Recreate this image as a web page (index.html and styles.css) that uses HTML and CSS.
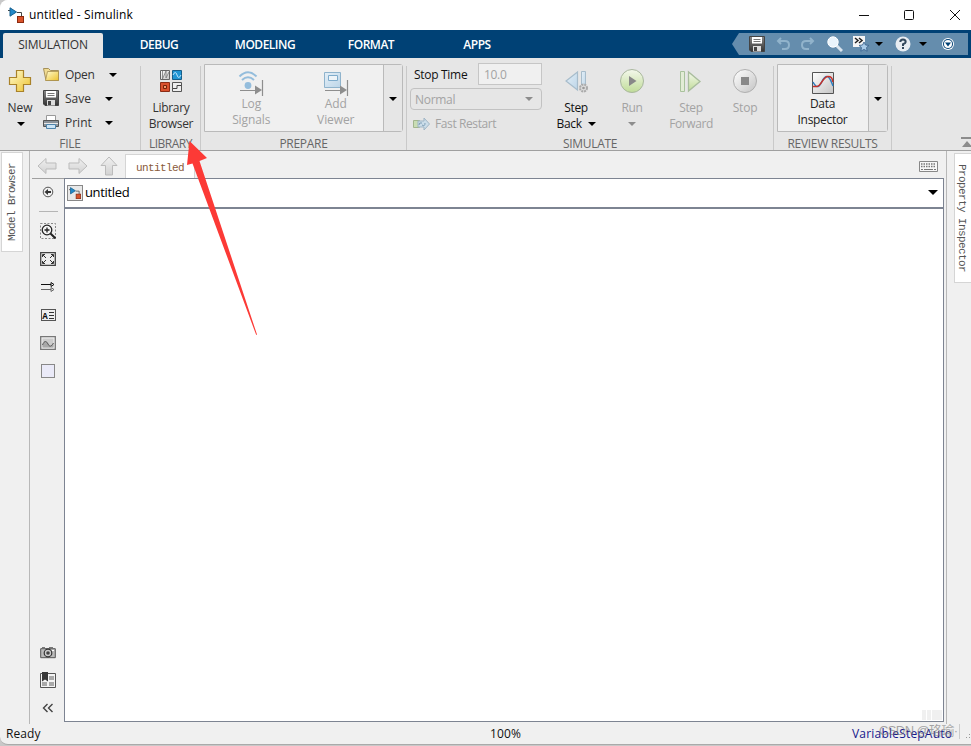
FILE: index.html
```
<!DOCTYPE html>
<html lang="en">
<head>
  <meta charset="UTF-8" />
  <title>untitled - Simulink</title>
  <link rel="stylesheet" href="styles.css">
</head>
<body>
  <svg class="defs" width="0" height="0">
    <defs>
      <linearGradient id="gold" x1="0" y1="0" x2="1" y2="1"><stop offset="0" stop-color="#fffbd0"/><stop offset="1" stop-color="#edc22e"/></linearGradient>
      <linearGradient id="grey" x1="0" y1="0" x2="1" y2="1"><stop offset="0" stop-color="#fff"/><stop offset="1" stop-color="#c4c4c4"/></linearGradient>
      <linearGradient id="nav" x1="0" y1="0" x2="0" y2="1"><stop offset="0" stop-color="#f0f0f0"/><stop offset="1" stop-color="#d2d2d2"/></linearGradient>
      <linearGradient id="dark" x1="0" y1="0" x2="0" y2="1"><stop offset="0" stop-color="#888"/><stop offset="1" stop-color="#333"/></linearGradient>
      <linearGradient id="green" x1="0" y1="0" x2="0" y2="1"><stop offset="0" stop-color="#f4f8ec"/><stop offset="1" stop-color="#c0dc98"/></linearGradient>
      <linearGradient id="blue" x1="0" y1="0" x2="1" y2="1"><stop offset="0" stop-color="#e4eff7"/><stop offset="1" stop-color="#bcd5e8"/></linearGradient>
    </defs>
    <symbol id="model" viewBox="0 0 16 16">
      <path d="M0 3.500h2M9 5.500h4.500V10" fill="none" stroke="#444"/>
      <path d="M2 .8 8.500 5 2 9.200z" fill="#2389c8" stroke="#17608f"/>
      <rect x="9.500" y="9.500" width="6" height="6" fill="#d9532a" stroke="#8c2a10"/>
    </symbol>
    <symbol id="floppy" viewBox="0 0 16 16">
      <path d="M.5.5h15v15H2L.5 14z" fill="url(#dark)" stroke="#444"/>
      <path d="M3 1h10v6.500H3z" fill="#fff"/><path d="M4.500 3.500h7M4.500 5.500h7" stroke="#777"/>
      <path d="M4 10h8v5.500H4z" fill="#ddd"/><path d="M5 11h3v4H5z" fill="#444"/>
    </symbol>
  </svg>

  <div class="window">
    <header class="titlebar">
      <svg class="app-icon" width="16" height="16"><use href="#model"/></svg>
      <span class="title">untitled - Simulink</span>
      <svg class="win-btns" width="101" height="14" fill="none" stroke="#111">
        <path d="M0 7.500h10"/><rect x="45.500" y="2.500" width="9" height="9" rx="1"/><path d="m91 2 10 10M101 2 91 12"/>
      </svg>
    </header>

    <nav class="tabs">
      <div class="tab active"><span>SIMULATION</span></div>
      <div class="tab"><span>DEBUG</span></div>
      <div class="tab"><span>MODELING</span></div>
      <div class="tab"><span>FORMAT</span></div>
      <div class="tab"><span>APPS</span></div>
      <div class="quick">
        <svg width="16" height="16"><use href="#floppy"/></svg>
        <svg class="undo" width="14" height="14" fill="none" stroke="#91b3cb" stroke-width="2"><path d="M5 1 2 4l3 3M2 4h7q4 0 4 4t-4 4H6"/></svg>
        <svg class="redo" width="14" height="14" fill="none" stroke="#91b3cb" stroke-width="2"><path d="m9 1 3 3-3 3M12 4H5Q1 4 1 8t4 4h3"/></svg>
        <svg class="search" width="16" height="16"><path d="m9 9 6 6" stroke="#d9e4ee" stroke-width="3"/><circle cx="6" cy="6" r="5.200" fill="#e9f3fb" stroke="#fff"/></svg>
        <svg class="fav" width="16" height="16"><path d="M0 0h12v11H0z" fill="#f5f5f5"/><path d="m2 2 3 2.500L2 7M6 2l3 2.500L6 7" fill="none" stroke="#222" stroke-width="1.500"/><path d="m11 6 1.500 3 3.500.4-2.500 2.200.7 3.600-3.200-1.800-3.200 1.800.7-3.600L6 9.400 9.500 9z" fill="#a9cbe8" stroke="#3e6791" stroke-width=".9"/></svg>
        <i class="caret"></i>
        <svg class="help" width="16" height="16"><circle cx="8" cy="8" r="7.500" fill="#e8edf2"/><path d="M5.300 6Q5.300 3.500 8 3.500T10.700 6Q10.700 7.200 8 8.300V10M8 11v2" fill="none" stroke="#34495d" stroke-width="2"/></svg>
        <i class="caret"></i>
        <svg class="more" width="12" height="12"><circle cx="6" cy="6" r="6" fill="#fff"/><circle cx="6" cy="6" r="5" fill="#004175"/><circle cx="6" cy="6" r="4" fill="#fff"/><path d="M3 4.500h6L6 8.500z" fill="#004175"/></svg>
      </div>
    </nav>

    <section class="ribbon">
      <div class="group file">
        <div class="content">
          <div class="new-btn">
            <svg width="24" height="24"><path d="M8.500 1.500h7v7h7v7h-7v7h-7v-7h-7v-7h7z" fill="url(#gold)" stroke="#a9822a" stroke-width="1.200"/></svg>
            <span>New</span>
            <i class="caret"></i>
          </div>
          <div class="file-rows">
            <div class="file-row open">
              <svg width="17" height="16"><path d="M.5 2.500h5l2 2h8v10H3z" fill="#f1dc92" stroke="#a5905a"/><path d="M4.500 5.500h11v9H2.500z" fill="url(#gold)" stroke="#a88f4f" stroke-width=".8"/></svg>
              <span>Open</span><i class="caret"></i>
            </div>
            <div class="file-row">
              <svg width="17" height="16"><use href="#floppy" width="16" height="16"/></svg>
              <span>Save</span><i class="caret"></i>
            </div>
            <div class="file-row">
              <svg width="17" height="16"><path d="M3.500 1.500h9v6h-9z" fill="#fff" stroke="#999"/><path d="M.5 6.500h15v6H.5z" fill="#8b939b" stroke="#555"/><path d="M1 9.500h14" stroke="#e8e8e8"/><path d="M3.500 10.500h9v4h-9z" fill="#cde5f6" stroke="#4f85ac"/></svg>
              <span>Print</span><i class="caret"></i>
            </div>
          </div>
        </div>
        <div class="group-name">FILE</div>
      </div>

      <div class="group library">
        <div class="content">
          <div class="big-btn">
            <svg width="24" height="24">
              <path d="M1.500 1.500h9v9h-9z" fill="url(#grey)" stroke="#666"/><path d="M3.500 2v8l3.500-8v7l3-6" fill="none" stroke="#777" stroke-width=".8"/>
              <path d="M13.500 1.500h9v9h-9z" fill="#2296d4" stroke="#175e89"/><path d="M14 6q2.500-5 4 0t4 0" fill="none" stroke="#bfe6ff"/>
              <path d="M1.500 13.500h9v9h-9z" fill="#d9502c" stroke="#8b2c15"/><path d="M4.500 16.500h3v3h-3z" fill="#f39b6c" stroke="#742008"/>
              <path d="M13.500 13.500h9v9h-9z" fill="#eee" stroke="#555"/><path d="M14 19.500h4v-3h4" fill="none" stroke="#444"/>
            </svg>
            <span>Library<br>Browser</span>
          </div>
        </div>
        <div class="group-name">LIBRARY</div>
      </div>

      <div class="group prepare">
        <div class="content">
          <div class="gallery">
            <div class="gallery-items">
              <div class="gallery-item disabled">
                <svg width="26" height="26"><path d="M2 20.500h17M24.500 10v16" fill="none" stroke="#8e8e8e" stroke-width="1.200"/><path d="M17 15.500 24 20l-7 4.500z" fill="#8e8e8e"/><circle cx="10" cy="15.500" r="3.400" fill="#94bddc"/><path d="M4 10q6-5.500 12 0M1.500 6.500q8.500-8.500 17 0" fill="none" stroke="#94bddc" stroke-width="2"/></svg>
                <span>Log<br>Signals</span>
              </div>
              <div class="gallery-item disabled">
                <svg width="26" height="26"><path d="M1.500 2.500h16v15h-16z" fill="url(#blue)" stroke="#8fb3cc"/><path d="M5.500 5.500h9v5h-9z" fill="#eef4f8" stroke="#7faccc"/><path d="M2 20.500h17M24.500 10v16" fill="none" stroke="#8e8e8e" stroke-width="1.200"/><path d="M17 15.500 24 20l-7 4.500z" fill="#8e8e8e"/></svg>
                <span>Add<br>Viewer</span>
              </div>
            </div>
            <div class="gallery-more"><i class="caret"></i></div>
          </div>
        </div>
        <div class="group-name">PREPARE</div>
      </div>

      <div class="group simulate">
        <div class="content">
          <div class="sim-form">
            <div class="stop-time"><label for="stopTime">Stop Time</label><input id="stopTime" type="text" value="10.0" disabled></div>
            <div class="mode"><span>Normal</span><i class="caret"></i></div>
            <div class="restart">
              <svg width="17" height="14"><path d="M.5 3.500h6v7h-6z" fill="#c9ddb4" stroke="#a2b58e"/><path d="M5 4h6V1l5.500 6L11 13v-3H5z" fill="#cbdde9" stroke="#9fb5c5"/><path d="M6 8q0-3 3-2M12 6q0 4-3 2" fill="none" stroke="#7d9db5"/></svg>
              <span>Fast Restart</span>
            </div>
          </div>
          <div class="big-btn step-back">
            <svg width="26" height="26"><path d="M13.500 4v18L2 13z" fill="url(#blue)" stroke="#a7bccb" stroke-width="1.200"/><path d="M17.500 3.500h4v19h-4z" fill="url(#blue)" stroke="#a7bccb"/><circle cx="19.500" cy="20" r="3.500" fill="#ddd" stroke="#aaa" stroke-width="2" stroke-dasharray="2 .8"/><circle cx="19.500" cy="20" r="1.300" fill="#999"/></svg>
            <span>Step<br>Back <i class="caret"></i></span>
          </div>
          <div class="big-btn run disabled">
            <svg width="26" height="26"><circle cx="13" cy="13" r="11.500" fill="url(#green)" stroke="#a9b79e"/><path d="M10 8v10l7.500-5z" fill="#888"/></svg>
            <span>Run</span>
            <i class="caret"></i>
          </div>
          <div class="big-btn forward disabled">
            <svg width="26" height="26"><path d="M2.500 3.500h4v20h-4z" fill="#e2ecd6" stroke="#a9c29d"/><path d="M10.500 4v19l11.500-9.500z" fill="url(#green)" stroke="#a9bd9d" stroke-width="1.300"/></svg>
            <span>Step<br>Forward</span>
          </div>
          <div class="big-btn stop disabled">
            <svg width="26" height="26"><circle cx="13" cy="13" r="11.500" fill="url(#grey)" stroke="#b0b0b0"/><path d="M9 9h8v8H9z" fill="#888"/></svg>
            <span>Stop</span>
          </div>
        </div>
        <div class="group-name">SIMULATE</div>
      </div>

      <div class="group review">
        <div class="content">
          <div class="gallery">
            <div class="gallery-items">
              <div class="gallery-item">
                <svg width="24" height="26"><path d="M1.500 2.500h21v21h-21z" fill="url(#grey)" stroke="#555"/><path d="M2 12c2 4 3 5 5 4.500 4-1 4-10 9-10 3 0 4 5 6 9.500" fill="none" stroke="#2c7dc0" stroke-width="1.500"/><path d="M2 16.500h4c4 0 6-10 11-10 4 0 4 2 5 5.500" fill="none" stroke="#c73028" stroke-width="1.500"/></svg>
                <span>Data<br>Inspector</span>
              </div>
            </div>
            <div class="gallery-more"><i class="caret"></i></div>
          </div>
        </div>
        <div class="group-name">REVIEW RESULTS</div>
      </div>
      <svg class="collapse" width="10" height="11"><path d="M0 0h10v2H0zM1 10l5-6 4 4.500V10z" fill="#8c8c8c"/></svg>
    </section>

    <main class="workspace">
      <aside class="left-rail"><div class="side-tab">Model Browser</div></aside>

      <div class="center">
        <div class="doc-bar">
          <svg width="20" height="18"><path d="M1 9 9 1.500V6h10v6H9v4.500z" fill="url(#nav)" stroke="#bbb"/></svg>
          <svg width="20" height="18"><path d="M19 9l-8-7.500V6H1v6h10v4.500z" fill="url(#nav)" stroke="#bbb"/></svg>
          <svg class="up" width="18" height="20"><path d="M9 1 1 9.500h4.500V19h7V9.500H17z" fill="url(#nav)" stroke="#bbb"/></svg>
          <div class="doc-tab">untitled</div>
          <svg class="keyboard" width="19" height="11"><path d="M.5.5h18v10H.5z" fill="#f7f7f7" stroke="#888"/><path d="M2 3h15M2 5.500h15" stroke="#777" stroke-width="1.500" stroke-dasharray="1.500 1"/><path d="M2 8.500h2M5 8.500h9M15 8.500h2" stroke="#777"/></svg>
        </div>

        <div class="editor">
          <div class="palette">
            <svg class="hide-bar" width="12" height="12"><circle cx="6" cy="6" r="4.800" fill="none" stroke="#555"/><path d="M9 6H5" stroke="#333" stroke-width="2"/><path d="M6 3v6L2.500 6z" fill="#333"/></svg>
            <hr>
            <svg width="16" height="16"><path d="M.5.500h15v15H.5z" fill="none" stroke="#888" stroke-dasharray="2 1.500"/><circle cx="7" cy="7" r="4.800" fill="#f4f4f4" stroke="#222" stroke-width="1.300"/><path d="M4.500 7h5M7 4.500v5" stroke="#222" stroke-width="1.300"/><path d="m10.500 10.500 5 5" stroke="#222" stroke-width="2"/></svg>
            <svg width="16" height="16"><path d="M.7 1.700h14.600v12.600H.7z" fill="#eee" stroke="#444" stroke-width="1.300"/><path d="m3 4 3 3M13 4l-3 3M3 12l3-3M13 12l-3-3M2.500 6V3.500H5M11 3.500h2.500V6M2.500 10v2.500H5M11 12.500h2.500V10" fill="none" stroke="#333"/></svg>
            <svg width="16" height="16"><path d="M1 5.500h12" stroke="#111"/><path d="m11 3.500 3 2-3 2z" fill="#eee" stroke="#111"/><path d="M1 10.500h12" stroke="#666"/><path d="m11 8.500 3 2-3 2z" fill="#eee" stroke="#666"/></svg>
            <div class="annotation">A<svg width="5" height="7"><path d="M0 .5h5M0 3.500h5M0 6.500h5" stroke="#333"/></svg></div>
            <svg width="16" height="16"><path d="M.7 1.700h14.600v12.600H.7z" fill="#eee" stroke="#777" stroke-width="1.300"/><path d="M2.500 3.500h11v9h-11z" fill="#ccc"/><path d="M2.500 10c2-5 4-4 5.500-1s3 3 5.500-1v4.500h-11z" fill="#a8a8a8"/><path d="M2.500 10c2-5 4-4 5.500-1s3 3 5.500-1" fill="none" stroke="#555"/></svg>
            <div class="area"></div>
            <svg class="camera" width="16" height="16"><path d="M.7 4.700h14.600v9H.7z" fill="#bbb" stroke="#555"/><path d="M2 3.500h3M9 3.500h4" stroke="#777"/><circle cx="8" cy="9" r="3.800" fill="#ccc" stroke="#333" stroke-width="1.200"/><circle cx="8" cy="9" r="1.800" fill="#444"/><path d="M12 6.500h2" stroke="#fff"/></svg>
            <svg width="16" height="16"><path d="M.5 1.500h15v14H.5z" fill="#f5f5f5" stroke="#555"/><path d="M9 4h5v4H9zM2 10h5v4H2zM9 10h5v4H9z" fill="#aaa"/><path d="M2 0h6v9.500L5 7.500l-3 2z" fill="#383838"/></svg>
            <svg width="16" height="16"><path d="M7.500 4 3.500 8l4 4M12.500 4l-4 4 4 4" fill="none" stroke="#444" stroke-width="1.400"/></svg>
          </div>

          <div class="canvas-frame">
            <div class="breadcrumb">
              <div class="crumb-icon"><svg width="12" height="12"><use href="#model"/></svg></div>
              <span>untitled</span>
              <i class="caret"></i>
            </div>
            <div class="canvas"><div class="zoom-hint"><b></b><b></b><b></b></div></div>
          </div>
        </div>
      </div>

      <aside class="right-rail"><div class="side-tab">Property Inspector</div></aside>
    </main>

    <footer class="statusbar">
      <span class="ready">Ready</span>
      <span class="zoom">100%</span>
      <span class="solver">VariableStepAuto</span>
      <svg class="grip" width="11" height="16"><path d="M.5 0v15" stroke="#ccc"/><path d="M10 10h1v1h-1zM10 13h1v1h-1zM7 13h1v1H7z" fill="#999"/></svg>
    </footer>

    <svg class="pointer" width="74" height="196"><path d="M2.500 0 20 17l-7.500 3L70 193.500l-.8.500L5.500 22.500 0 24z" fill="#fc3a36"/></svg>
    <div class="watermark">CSDN @珞瑜·</div>
  </div>
</body>
</html>
```
FILE: styles.css
```
* {
  box-sizing: border-box;
}
body {
  margin: 0;
  background: #c8c8c8;
  font-family: 'Open Sans', 'Noto Sans', sans-serif;
  font-size: 12px;
  color: #333;
}
svg {
  display: block;
  flex: none;
}
.defs {
  position: absolute;
}
.window {
  position: relative;
  display: flex;
  flex-direction: column;
  width: 971px;
  height: 745px;
  overflow: hidden;
  background: #f0f0f0;
  border-bottom: 1px solid #aaa;
  border-radius: 8px 0 0 8px;
}
.caret {
  display: inline-block;
  flex: none;
  border: 4px solid transparent;
  border-top-color: #000;
  border-bottom: 0;
}

/* title bar */
.titlebar {
  display: flex;
  align-items: center;
  height: 30px;
  padding: 0 11px 2px 8px;
  background: #fff;
  color: #000;
}
.app-icon {
  margin-top: 1px;
}
.title {
  margin-left: 5px;
  letter-spacing: 0.14px;
}
.win-btns {
  margin: 1px 0 0 auto;
}

/* tabs */
.tabs {
  display: flex;
  align-items: flex-end;
  height: 28px;
  padding-left: 3px;
  background: #004175;
}
.tab {
  width: 106px;
  height: 25px;
  line-height: 23px;
  text-align: center;
  color: #fff;
  font-weight: 600;
  letter-spacing: -0.5px;
}
.tab.active {
  width: 100px;
  margin-right: 3px;
  background: #e6e6e6;
  border-radius: 2px 2px 0 0;
  color: #333;
  font-weight: 400;
  letter-spacing: -0.2px;
}
.quick {
  display: flex;
  align-items: center;
  align-self: flex-start;
  width: 236px;
  height: 22px;
  margin: 3px 3px 0 auto;
  padding-left: 17px;
  background: #658dad;
  clip-path: polygon(7px 0, 100% 0, 100% 100%, 7px 100%, 0 50%);
}
.undo { margin-left: 11px; }
.redo { margin-left: 11px; }
.search { margin-left: 12px; }
.fav { margin-left: 10px; }
.quick .caret { margin-left: 6px; }
.help { margin-left: 12px; }
.quick .help + .caret { margin-left: 8px; }
.more { margin-left: 15px; }

/* ribbon */
.ribbon {
  display: flex;
  flex: none;
  height: 93px;
  background: #e6e6e6;
  border-bottom: 1px solid #a0a0a0;
}
.group {
  position: relative;
  display: flex;
  flex-direction: column;
  height: 92px;
}
.group::after {
  content: "";
  position: absolute;
  right: 0;
  top: 8px;
  bottom: 0;
  width: 1px;
  background: #c9c9c9;
}
.content {
  display: flex;
  height: 78px;
}
.group-name {
  height: 14px;
  padding-right: 1px;
  line-height: 15px;
  text-align: center;
  color: #666;
  letter-spacing: -0.3px;
  white-space: nowrap;
}
.file { width: 141px; }
.library { width: 60px; }
.prepare { width: 206px; }
.simulate { width: 367px; }
.review { width: 118px; }

.new-btn {
  display: flex;
  flex-direction: column;
  align-items: center;
  width: 40px;
  padding-top: 11px;
}
.new-btn span {
  height: 16px;
  margin-top: 7px;
  line-height: 16px;
}
.new-btn .caret {
  margin: 6px 0 0 1px;
}
.file-rows {
  padding: 4px 0 0 3px;
}
.file-row {
  display: flex;
  align-items: center;
  height: 24px;
}
.file-row span {
  width: 40px;
  margin-left: 5px;
}
.file-row.open span {
  width: 44px;
  letter-spacing: -0.3px;
}
.file-row .caret {
  margin-top: 1px;
}

.big-btn {
  display: flex;
  flex-direction: column;
  align-items: center;
  width: 60px;
  padding-top: 10px;
  line-height: 16px;
  text-align: center;
}
.big-btn span {
  margin-top: 6px;
  white-space: nowrap;
}
.library .big-btn {
  padding-top: 11px;
  letter-spacing: -0.3px;
}
.library .big-btn span {
  margin-top: 7px;
}
.library .group-name {
  letter-spacing: -0.5px;
}
.disabled {
  color: #a3a3a3;
}
.disabled .caret {
  border-top-color: #8d8d8d;
}

.gallery {
  display: flex;
  width: 199px;
  height: 68px;
  margin: 6px 0 0 3px;
  background: #f0f0f0;
  border: 1px solid #bababa;
  border-radius: 0 3px 3px 0;
}
.gallery-items {
  display: flex;
  flex: 1;
  padding: 0 5px 0 4px;
}
.gallery-item {
  display: flex;
  flex: 1;
  flex-direction: column;
  align-items: center;
  padding-top: 5px;
  line-height: 16px;
  text-align: center;
  letter-spacing: -0.1px;
}
.gallery-more {
  display: flex;
  align-items: center;
  justify-content: center;
  width: 19px;
  background: #e6e6e6;
  border-left: 1px solid #bababa;
}
.gallery-more .caret {
  margin-top: 2px;
}
.review .gallery {
  width: 111px;
}
.review .gallery-item {
  color: #222;
  letter-spacing: -0.3px;
}

/* simulate group */
.sim-form {
  width: 135px;
  padding: 5px 0 0 3px;
}
.stop-time {
  display: flex;
  align-items: center;
  justify-content: space-between;
  height: 22px;
  padding-left: 4px;
  color: #111;
  letter-spacing: -0.3px;
}
.stop-time input {
  width: 64px;
  height: 22px;
  padding: 0 5px;
  background: #f0f0f0;
  border: 1px solid #c6c6c6;
  color: #a3a3a3;
  font: inherit;
  letter-spacing: -0.3px;
}
.mode {
  display: flex;
  align-items: center;
  justify-content: space-between;
  height: 22px;
  margin-top: 3px;
  padding: 0 8px 0 4px;
  border: 1px solid #c2c2c2;
  border-radius: 4px;
  color: #a3a3a3;
  letter-spacing: -0.3px;
}
.mode .caret {
  border-top-color: #8d8d8d;
}
.restart {
  display: flex;
  align-items: center;
  height: 25px;
  margin-top: 1px;
  padding-left: 3px;
  color: #a3a3a3;
}
.restart span {
  margin-left: 5px;
  letter-spacing: -0.4px;
}
.step-back {
  width: 68px;
  color: #111;
  letter-spacing: -0.3px;
}
.step-back .caret {
  margin: 0 0 2px 3px;
}
.step-back svg {
  margin-left: 2px;
}
.run {
  width: 44px;
  letter-spacing: -0.3px;
}
.run .caret { margin-top: 6px; }
.forward {
  width: 74px;
  letter-spacing: -0.4px;
}
.stop {
  width: 34px;
  letter-spacing: -0.2px;
}
.collapse {
  margin: 79px 0 0 auto;
}

/* workspace */
.workspace {
  display: flex;
  height: 573px;
}
.left-rail {
  width: 30px;
  padding: 1px 0 0 1px;
  border-right: 1px solid #b8b8b8;
}
.side-tab {
  width: 22px;
  height: 100px;
  background: #fff;
  border: 1px solid #d5d5d5;
  color: #555;
  font-family: 'Liberation Mono', monospace;
  font-size: 11px;
  letter-spacing: -0.6px;
  line-height: 20px;
  text-align: center;
  white-space: nowrap;
  writing-mode: vertical-rl;
}
.left-rail .side-tab {
  transform: rotate(180deg);
}
.right-rail {
  flex: 1;
  padding: 2px 0 0 7px;
  border-left: 1px solid #b8b8b8;
  overflow: hidden;
}
.right-rail .side-tab {
  width: 18px;
  height: 130px;
  line-height: 18px;
}
.center {
  display: flex;
  flex-direction: column;
  width: 916px;
  padding-right: 2px;
}
.doc-bar {
  display: flex;
  align-items: center;
  height: 27px;
  margin-left: 2px;
  padding: 3px 6px 0 5px;
}
.doc-bar svg + svg {
  margin-left: 11px;
}
.doc-bar svg + .up {
  margin-left: 12px;
}
.doc-tab {
  width: 70px;
  height: 25px;
  margin-left: 7px;
  background: #fff;
  border: 1px solid #d5d5d5;
  border-bottom: 0;
  color: #8a5a3a;
  font-family: 'Liberation Mono', monospace;
  font-size: 11px;
  letter-spacing: -0.6px;
  line-height: 26px;
  text-align: center;
}
.doc-bar .keyboard {
  margin-left: auto;
}
.editor {
  display: flex;
  height: 544px;
}
.palette {
  display: flex;
  flex-direction: column;
  align-items: center;
  gap: 12px;
  width: 34px;
  padding: 8px 0 6px 2px;
  background: linear-gradient(#a0a0a0, #a0a0a0) right top / 32px 1px no-repeat;
}
.palette hr {
  width: 19px;
  height: 1px;
  margin: 0;
  border: 0;
  background: #b5b5b5;
}
.palette .hide-bar {
  margin-bottom: 1px;
}
.palette hr + svg {
  margin-top: -1px;
}
.annotation {
  display: flex;
  flex: none;
  align-items: center;
  justify-content: center;
  gap: 1px;
  width: 15px;
  height: 12px;
  margin: 2px 0;
  background: #eee;
  border: 1px solid #555;
  color: #111;
  font-size: 8px;
  font-weight: 700;
}
.area {
  flex: none;
  width: 14px;
  height: 14px;
  margin: 1px 0;
  background: #eaeaf8;
  border: 1px solid #888;
}
.palette .camera {
  margin-top: auto;
}
.canvas-frame {
  display: flex;
  flex: 1;
  flex-direction: column;
  background: #fff;
  border: 1px solid #7d8492;
}
.breadcrumb {
  display: flex;
  align-items: center;
  height: 30px;
  padding: 0 5px 1px 2px;
  border-bottom: 2px solid #7d8492;
  color: #000;
  font-size: 13px;
}
.crumb-icon {
  display: flex;
  align-items: center;
  justify-content: center;
  width: 16px;
  height: 16px;
  background: #e8e8e8;
  border: 1px solid #888;
}
.breadcrumb span {
  margin: -1px 0 0 2px;
  letter-spacing: -0.35px;
}
.breadcrumb .caret {
  margin: -1px 0 0 auto;
  border-width: 5px 5px 0;
}
.canvas {
  display: flex;
  flex: 1;
  align-items: flex-end;
  justify-content: flex-end;
  padding: 1px;
}
.zoom-hint {
  display: flex;
  gap: 1px;
}
.zoom-hint b {
  width: 4px;
  height: 10px;
  background: #f0f0f0;
}
.zoom-hint b:last-child {
  width: 10px;
}

/* status bar */
.statusbar {
  display: grid;
  grid-template-columns: 484px 362px 107px 1fr;
  height: 20px;
  padding-left: 6px;
  line-height: 20px;
  color: #111;
}
.ready,
.zoom {
  letter-spacing: 0.1px;
}
.solver {
  color: #16168c;
  letter-spacing: 0.2px;
}

/* overlays */
.pointer {
  position: absolute;
  left: 187px;
  top: 141px;
}
.watermark {
  position: absolute;
  left: 879px;
  top: 722px;
  color: rgba(110, 110, 110, 0.6);
  font-family: 'Liberation Sans', 'Noto Sans CJK SC', sans-serif;
  font-size: 13px;
  line-height: 17px;
  letter-spacing: -0.6px;
  white-space: nowrap;
}
```
